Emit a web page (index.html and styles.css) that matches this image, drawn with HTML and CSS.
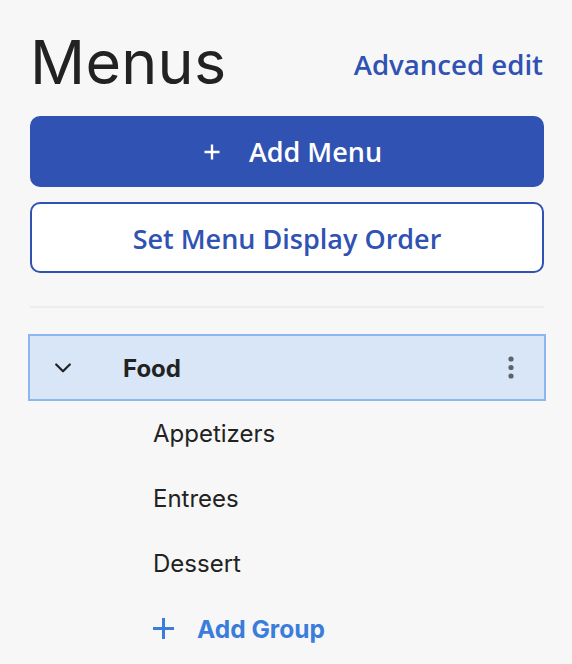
FILE: index.html
```html
<!DOCTYPE html>
<html lang="en">
<head>
<meta charset="utf-8">
<title>Menus</title>
<link rel="stylesheet" href="styles.css">
</head>
<body>
<div class="panel">
  <header class="header">
    <h1 class="title">Menus</h1>
    <a class="advanced" href="#">Advanced edit</a>
  </header>

  <button class="btn btn-primary" type="button">
    <svg class="btn-plus" width="16" height="16" viewBox="0 0 16 16" aria-hidden="true">
      <path d="M8 0.5 V15.5 M0.5 8 H15.5" stroke="#ffffff" stroke-width="2.4" fill="none"/>
    </svg>
    <span>Add Menu</span>
  </button>

  <button class="btn btn-outline" type="button">Set Menu Display Order</button>

  <div class="divider"></div>

  <div class="menu-row">
    <svg class="chevron" width="16" height="10" viewBox="0 0 16 10" aria-hidden="true">
      <path d="M1.2 1.5 L8 8.3 L14.8 1.5" stroke="#222222" stroke-width="2.2" fill="none" stroke-linecap="round" stroke-linejoin="round"/>
    </svg>
    <span class="menu-name">Food</span>
    <svg class="kebab" width="6" height="24" viewBox="0 0 6 24" aria-hidden="true">
      <circle cx="3" cy="3" r="2.6" fill="#5f6368"/>
      <circle cx="3" cy="11.5" r="2.6" fill="#5f6368"/>
      <circle cx="3" cy="20" r="2.6" fill="#5f6368"/>
    </svg>
  </div>

  <ul class="groups">
    <li class="group">Appetizers</li>
    <li class="group">Entrees</li>
    <li class="group">Dessert</li>
    <li class="group add-group">
      <svg class="add-plus" width="21" height="21" viewBox="0 0 21 21" aria-hidden="true">
        <path d="M10.5 0 V21 M0 10.5 H21" stroke="#3b7ddb" stroke-width="3" fill="none"/>
      </svg>
      <span>Add Group</span>
    </li>
  </ul>
</div>
</body>
</html>
```

FILE: styles.css
```css
html, body {
  margin: 0;
  padding: 0;
  background: #f7f7f7;
}

.panel {
  padding: 26px 28px 0 30px;
  font-family: Inter, "Liberation Sans", sans-serif;
  color: #222222;
}

.header {
  display: flex;
  justify-content: space-between;
  align-items: center;
  height: 72px;
}

.title {
  margin: 0;
  font-family: Inter, "Liberation Sans", sans-serif;
  font-weight: 400;
  font-size: 61px;
  line-height: 72px;
  letter-spacing: 0.3px;
  color: #222222;
}

.advanced {
  font-family: "Open Sans", "Liberation Sans", sans-serif;
  font-weight: 600;
  font-size: 27.6px;
  line-height: 36px;
  color: #2f52b3;
  text-decoration: none;
  padding-top: 3px;
  margin-right: 1px;
}

.btn {
  display: flex;
  align-items: center;
  justify-content: center;
  box-sizing: border-box;
  width: 100%;
  height: 71px;
  border-radius: 10px;
  font-family: "Open Sans", "Liberation Sans", sans-serif;
  font-weight: 600;
  font-size: 27px;
  line-height: 36px;
  cursor: pointer;
  padding: 0;
}

.btn-primary {
  margin-top: 18px;
  background: #2f52b3;
  border: none;
  color: #ffffff;
  padding-left: 12px;
  gap: 29px;
}

.btn-plus {
  flex: none;
}

.btn-outline {
  margin-top: 15px;
  background: #ffffff;
  border: 2px solid #2f52b3;
  color: #2f52b3;
  padding-top: 3px;
}

.divider {
  margin-top: 33px;
  height: 2px;
  background: #ededed;
}

.menu-row {
  display: flex;
  align-items: center;
  box-sizing: border-box;
  height: 67px;
  margin: 26px -2px 0 -2px;
  padding: 0 30px 0 25px;
  background: #d8e6f7;
  border: 2px solid #8cb6ee;
}

.chevron {
  flex: none;
}

.menu-name {
  flex: 1;
  margin-left: 52px;
  font-weight: 700;
  font-size: 24px;
  line-height: 30px;
  padding-top: 2px;
}

.kebab {
  flex: none;
}

.groups {
  list-style: none;
  margin: 0;
  padding: 0 0 0 123px;
}

.group {
  display: flex;
  align-items: center;
  height: 65px;
  font-size: 24px;
  line-height: 30px;
  font-weight: 400;
}

.add-group {
  gap: 23px;
  color: #3b7ddb;
  font-weight: 700;
  font-size: 24.5px;
}

.add-plus {
  flex: none;
}
```
